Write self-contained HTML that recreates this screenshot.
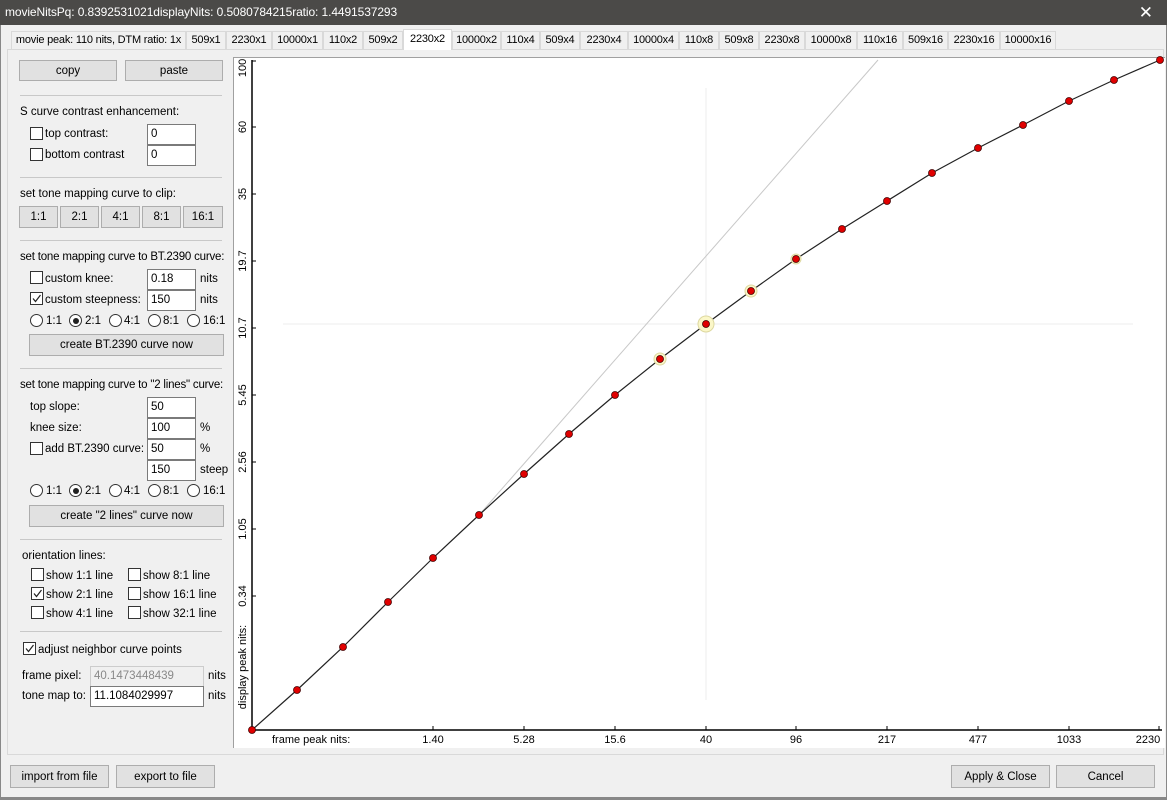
<!DOCTYPE html>
<html><head><meta charset="utf-8"><style>
*{box-sizing:border-box;margin:0;padding:0}
body{width:1167px;height:800px;overflow:hidden;background:#f0f0f0;font-family:"Liberation Sans","DejaVu Sans",sans-serif;font-size:11.5px;color:#000;position:relative}
.a{position:absolute}
.title{left:0;top:0;width:1167px;height:25px;background:#4b4a48;color:#fff;font-size:12px;line-height:25px;padding-left:5px;letter-spacing:-0.1px}
.tab{position:absolute;top:31px;height:18px;border:1px solid #d9d9d9;border-bottom:none;background:#f0f0f0;line-height:17px;text-align:center;font-size:11px;white-space:nowrap;overflow:hidden;letter-spacing:-0.2px}
.btn{position:absolute;background:#e1e1e1;border:1px solid #adadad;text-align:center;font-size:11.5px}
.hr{position:absolute;left:20px;width:202px;height:1px;background:#c8c8c8}
.cb{position:absolute;width:13px;height:13px;border:1px solid #333;background:#fff}
.rb{position:absolute;width:13px;height:13px;border:1px solid #333;border-radius:50%;background:#fff}
.rb.on::after{content:"";position:absolute;left:2.5px;top:2.5px;width:6px;height:6px;border-radius:50%;background:#222}
.in{position:absolute;height:21px;border:1px solid #7a7a7a;background:#fff;padding-left:3px;line-height:19px;font-size:11.5px}
.t{position:absolute;white-space:nowrap;margin-top:1px}
</style></head><body>
<div class="a title">movieNitsPq: 0.8392531021displayNits: 0.5080784215ratio: 1.4491537293</div>
<div class="a" style="right:14px;top:3px;color:#fff;font-size:17px">✕</div>
<div class="a" style="left:0;top:25px;width:1167px;height:775px;border-left:1px solid #888;border-right:1px solid #888"></div>
<div class="a" style="left:7px;top:49px;width:1157px;height:706px;border:1px solid #d9d9d9;background:#f0f0f0"></div>
<div class="tab" style="left:11px;width:175px">movie peak: 110 nits, DTM ratio: 1x</div>
<div class="tab" style="left:186px;width:40px">509x1</div>
<div class="tab" style="left:226px;width:46px">2230x1</div>
<div class="tab" style="left:272px;width:51px">10000x1</div>
<div class="tab" style="left:323px;width:40px">110x2</div>
<div class="tab" style="left:363px;width:40px">509x2</div>
<div class="tab" style="left:403px;width:49px;top:29px;height:21px;background:#fff;z-index:2;line-height:19px">2230x2</div>
<div class="tab" style="left:452px;width:49px">10000x2</div>
<div class="tab" style="left:501px;width:39px">110x4</div>
<div class="tab" style="left:540px;width:40px">509x4</div>
<div class="tab" style="left:580px;width:48px">2230x4</div>
<div class="tab" style="left:628px;width:51px">10000x4</div>
<div class="tab" style="left:679px;width:40px">110x8</div>
<div class="tab" style="left:719px;width:40px">509x8</div>
<div class="tab" style="left:759px;width:46px">2230x8</div>
<div class="tab" style="left:805px;width:52px">10000x8</div>
<div class="tab" style="left:857px;width:46px">110x16</div>
<div class="tab" style="left:903px;width:45px">509x16</div>
<div class="tab" style="left:948px;width:52px">2230x16</div>
<div class="tab" style="left:1000px;width:56px">10000x16</div>

<div class="btn" style="left:19px;top:60px;width:98px;height:21px;line-height:20px">copy</div>
<div class="btn" style="left:125px;top:60px;width:98px;height:21px;line-height:20px">paste</div>
<div class="hr" style="top:95px"></div>
<div class="t" style="left:20px;top:105px">S curve contrast enhancement:</div>
<div class="cb" style="left:30px;top:127px"></div><div class="t" style="left:45px;top:127px">top contrast:</div>
<div class="in" style="left:147px;top:124px;width:49px">0</div>
<div class="cb" style="left:30px;top:148px"></div><div class="t" style="left:45px;top:148px">bottom contrast</div>
<div class="in" style="left:147px;top:145px;width:49px">0</div>
<div class="hr" style="top:177px"></div>
<div class="t" style="left:20px;top:187px">set tone mapping curve to clip:</div>
<div class="btn" style="left:19px;top:206px;width:39px;height:22px;line-height:21px">1:1</div>
<div class="btn" style="left:60px;top:206px;width:39px;height:22px;line-height:21px">2:1</div>
<div class="btn" style="left:101px;top:206px;width:39px;height:22px;line-height:21px">4:1</div>
<div class="btn" style="left:142px;top:206px;width:39px;height:22px;line-height:21px">8:1</div>
<div class="btn" style="left:183px;top:206px;width:40px;height:22px;line-height:21px">16:1</div>
<div class="hr" style="top:240px"></div>
<div class="t" style="left:20px;top:250px;letter-spacing:-0.2px">set tone mapping curve to BT.2390 curve:</div>
<div class="cb" style="left:30px;top:271px"></div><div class="t" style="left:45px;top:272px">custom knee:</div>
<div class="in" style="left:147px;top:269px;width:49px">0.18</div><div class="t" style="left:200px;top:272px">nits</div>
<div class="cb" style="left:30px;top:292px"><svg width="11" height="11" style="position:absolute;left:0;top:0"><path d="M2 5.5 L4.5 8.5 L9.5 2" stroke="#222" fill="none" stroke-width="1.2"/></svg></div><div class="t" style="left:45px;top:293px">custom steepness:</div>
<div class="in" style="left:147px;top:290px;width:49px">150</div><div class="t" style="left:200px;top:293px">nits</div>
<div class="rb" style="left:30px;top:314px"></div><div class="t" style="left:46px;top:314px">1:1</div>
<div class="rb on" style="left:69px;top:314px"></div><div class="t" style="left:85px;top:314px">2:1</div>
<div class="rb" style="left:109px;top:314px"></div><div class="t" style="left:124px;top:314px">4:1</div>
<div class="rb" style="left:148px;top:314px"></div><div class="t" style="left:163px;top:314px">8:1</div>
<div class="rb" style="left:187px;top:314px"></div><div class="t" style="left:203px;top:314px">16:1</div>
<div class="btn" style="left:29px;top:334px;width:195px;height:22px;line-height:21px">create BT.2390 curve now</div>
<div class="hr" style="top:368px"></div>
<div class="t" style="left:20px;top:378px;letter-spacing:-0.2px">set tone mapping curve to "2 lines" curve:</div>
<div class="t" style="left:30px;top:400px">top slope:</div><div class="in" style="left:147px;top:397px;width:49px">50</div>
<div class="t" style="left:30px;top:421px">knee size:</div><div class="in" style="left:147px;top:418px;width:49px">100</div><div class="t" style="left:200px;top:421px">%</div>
<div class="cb" style="left:30px;top:442px"></div><div class="t" style="left:45px;top:442px">add BT.2390 curve:</div>
<div class="in" style="left:147px;top:439px;width:49px">50</div><div class="t" style="left:200px;top:442px">%</div>
<div class="in" style="left:147px;top:460px;width:49px">150</div><div class="t" style="left:200px;top:463px">steep</div>
<div class="rb" style="left:30px;top:484px"></div><div class="t" style="left:46px;top:484px">1:1</div>
<div class="rb on" style="left:69px;top:484px"></div><div class="t" style="left:85px;top:484px">2:1</div>
<div class="rb" style="left:109px;top:484px"></div><div class="t" style="left:124px;top:484px">4:1</div>
<div class="rb" style="left:148px;top:484px"></div><div class="t" style="left:163px;top:484px">8:1</div>
<div class="rb" style="left:187px;top:484px"></div><div class="t" style="left:203px;top:484px">16:1</div>
<div class="btn" style="left:29px;top:505px;width:195px;height:22px;line-height:21px">create "2 lines" curve now</div>
<div class="hr" style="top:539px"></div>
<div class="t" style="left:22px;top:549px">orientation lines:</div>
<div class="cb" style="left:31px;top:568px"></div><div class="t" style="left:46px;top:569px">show 1:1 line</div>
<div class="cb" style="left:128px;top:568px"></div><div class="t" style="left:143px;top:569px">show 8:1 line</div>
<div class="cb" style="left:31px;top:587px"><svg width="11" height="11" style="position:absolute;left:0;top:0"><path d="M2 5.5 L4.5 8.5 L9.5 2" stroke="#222" fill="none" stroke-width="1.2"/></svg></div><div class="t" style="left:46px;top:588px">show 2:1 line</div>
<div class="cb" style="left:128px;top:587px"></div><div class="t" style="left:143px;top:588px">show 16:1 line</div>
<div class="cb" style="left:31px;top:606px"></div><div class="t" style="left:46px;top:607px">show 4:1 line</div>
<div class="cb" style="left:128px;top:606px"></div><div class="t" style="left:143px;top:607px">show 32:1 line</div>
<div class="hr" style="top:631px"></div>
<div class="cb" style="left:23px;top:642px"><svg width="11" height="11" style="position:absolute;left:0;top:0"><path d="M2 5.5 L4.5 8.5 L9.5 2" stroke="#222" fill="none" stroke-width="1.2"/></svg></div><div class="t" style="left:38px;top:643px">adjust neighbor curve points</div>
<div class="t" style="left:22px;top:669px">frame pixel:</div>
<div class="in" style="left:90px;top:666px;width:114px;background:#f0f0f0;border-color:#ccc;color:#888">40.1473448439</div><div class="t" style="left:208px;top:669px">nits</div>
<div class="t" style="left:22px;top:689px">tone map to:</div>
<div class="in" style="left:90px;top:686px;width:114px">11.1084029997</div><div class="t" style="left:208px;top:689px">nits</div>

<div class="a" style="left:233px;top:57px;width:932px;height:691px;background:#fff;border-left:1px solid #a0a0a0;border-top:1px solid #a0a0a0"></div>
<svg class="a" style="left:0;top:0" width="1167" height="800" font-family="Liberation Sans, sans-serif" font-size="11">
<line x1="706" y1="88" x2="706" y2="700" stroke="#ececec"/>
<line x1="283" y1="324" x2="1133" y2="324" stroke="#ececec"/>
<line x1="479" y1="515" x2="878" y2="60" stroke="#c8c8c8"/>
<line x1="252" y1="60" x2="252" y2="731" stroke="#000" stroke-width="1.5"/>
<line x1="251" y1="730" x2="1162" y2="730" stroke="#000" stroke-width="1.5"/>
<g stroke="#000">
<line x1="252" y1="61" x2="256" y2="61"/><line x1="252" y1="127" x2="256" y2="127"/><line x1="252" y1="194" x2="256" y2="194"/><line x1="252" y1="261" x2="256" y2="261"/><line x1="252" y1="328" x2="256" y2="328"/><line x1="252" y1="395" x2="256" y2="395"/><line x1="252" y1="462" x2="256" y2="462"/><line x1="252" y1="529" x2="256" y2="529"/><line x1="252" y1="596" x2="256" y2="596"/>
<line x1="433" y1="726" x2="433" y2="730"/><line x1="524" y1="726" x2="524" y2="730"/><line x1="615" y1="726" x2="615" y2="730"/><line x1="706" y1="726" x2="706" y2="730"/><line x1="796" y1="726" x2="796" y2="730"/><line x1="887" y1="726" x2="887" y2="730"/><line x1="978" y1="726" x2="978" y2="730"/><line x1="1069" y1="726" x2="1069" y2="730"/><line x1="1159" y1="726" x2="1159" y2="730"/>
</g>
<g text-anchor="middle">
<text transform="translate(246,68) rotate(-90)">100</text>
<text transform="translate(246,127) rotate(-90)">60</text>
<text transform="translate(246,194) rotate(-90)">35</text>
<text transform="translate(246,261) rotate(-90)">19.7</text>
<text transform="translate(246,328) rotate(-90)">10.7</text>
<text transform="translate(246,395) rotate(-90)">5.45</text>
<text transform="translate(246,462) rotate(-90)">2.56</text>
<text transform="translate(246,529) rotate(-90)">1.05</text>
<text transform="translate(246,596) rotate(-90)">0.34</text>
<text transform="translate(246,667) rotate(-90)">display peak nits:</text>
<text x="433" y="743">1.40</text><text x="524" y="743">5.28</text><text x="615" y="743">15.6</text><text x="706" y="743">40</text><text x="796" y="743">96</text><text x="887" y="743">217</text><text x="978" y="743">477</text><text x="1069" y="743">1033</text><text x="1148" y="743">2230</text>
</g>
<text x="272" y="743">frame peak nits:</text>
<polyline fill="none" stroke="#222" stroke-width="1.2" points="252,730 297,690 343,647 388,602 433,558 479,515 524,474 569,434 615,395 660,359 706,324 751,291 796,259 842,229 887,201 932,173 978,148 1023,125 1069,101 1114,80 1160,60"/>
<g fill="#fbf7c8" stroke="#ddd8a0"><circle cx="660" cy="359" r="6"/><circle cx="706" cy="324" r="8"/><circle cx="751" cy="291" r="6"/><circle cx="796" cy="259" r="5"/></g>
<g fill="#e00000" stroke="#400" stroke-width="0.8">
<circle cx="252" cy="730" r="3.5"/><circle cx="297" cy="690" r="3.5"/><circle cx="343" cy="647" r="3.5"/><circle cx="388" cy="602" r="3.5"/><circle cx="433" cy="558" r="3.5"/><circle cx="479" cy="515" r="3.5"/><circle cx="524" cy="474" r="3.5"/><circle cx="569" cy="434" r="3.5"/><circle cx="615" cy="395" r="3.5"/><circle cx="660" cy="359" r="3.5"/><circle cx="706" cy="324" r="3.5"/><circle cx="751" cy="291" r="3.5"/><circle cx="796" cy="259" r="3.5"/><circle cx="842" cy="229" r="3.5"/><circle cx="887" cy="201" r="3.5"/><circle cx="932" cy="173" r="3.5"/><circle cx="978" cy="148" r="3.5"/><circle cx="1023" cy="125" r="3.5"/><circle cx="1069" cy="101" r="3.5"/><circle cx="1114" cy="80" r="3.5"/><circle cx="1160" cy="60" r="3.5"/>
</g>
</svg>

<div class="a" style="left:0;top:797px;width:1167px;height:3px;background:#888"></div>
<div class="btn" style="left:10px;top:765px;width:99px;height:23px;line-height:22px">import from file</div>
<div class="btn" style="left:116px;top:765px;width:99px;height:23px;line-height:22px">export to file</div>
<div class="btn" style="left:951px;top:765px;width:99px;height:23px;line-height:22px">Apply &amp; Close</div>
<div class="btn" style="left:1056px;top:765px;width:99px;height:23px;line-height:22px">Cancel</div>
</body></html>
